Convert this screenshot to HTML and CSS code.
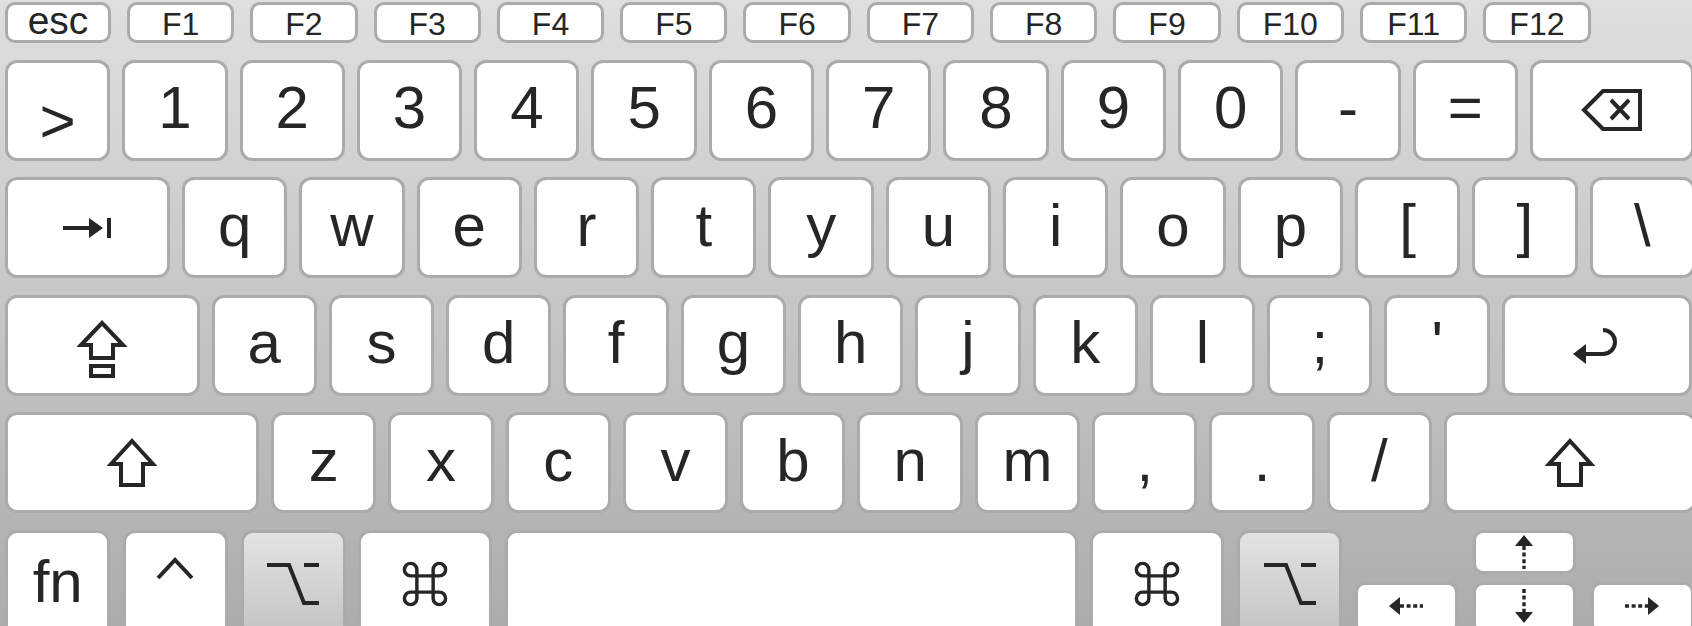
FILE: index.html
```html
<!DOCTYPE html>
<html lang="en">
<head>
  <meta charset="UTF-8">
  <title>Keyboard</title>
  <link rel="stylesheet" href="styles.css">
</head>
<body>
  <div class="keyboard">
    <!-- Function row -->
    <div class="row row-fn">
      <div class="key fkey esc">esc</div>
      <div class="key fkey">F1</div>
      <div class="key fkey">F2</div>
      <div class="key fkey">F3</div>
      <div class="key fkey">F4</div>
      <div class="key fkey">F5</div>
      <div class="key fkey">F6</div>
      <div class="key fkey">F7</div>
      <div class="key fkey">F8</div>
      <div class="key fkey">F9</div>
      <div class="key fkey">F10</div>
      <div class="key fkey">F11</div>
      <div class="key fkey">F12</div>
    </div>

    <!-- Number row -->
    <div class="row">
      <div class="key gt">&gt;</div>
      <div class="key">1</div>
      <div class="key">2</div>
      <div class="key">3</div>
      <div class="key">4</div>
      <div class="key">5</div>
      <div class="key">6</div>
      <div class="key">7</div>
      <div class="key">8</div>
      <div class="key">9</div>
      <div class="key">0</div>
      <div class="key">-</div>
      <div class="key">=</div>
      <div class="key w-back icon-key">
        <svg class="ico" width="62" height="44" viewBox="0 0 62 44">
          <path d="M3 22L22 3H59V41H22Z"/>
          <path d="M30 12L48 31M48 12L30 31"/>
        </svg>
      </div>
    </div>

    <!-- Top letter row -->
    <div class="row">
      <div class="key w-tab icon-key">
        <svg class="ico" width="50" height="24" viewBox="0 0 50 24">
          <path d="M0 12H30"/>
          <path class="fill" d="M26 2L40 12L26 22Z"/>
          <rect class="fill" x="44" y="2" width="4" height="20"/>
        </svg>
      </div>
      <div class="key">q</div>
      <div class="key">w</div>
      <div class="key">e</div>
      <div class="key">r</div>
      <div class="key">t</div>
      <div class="key">y</div>
      <div class="key">u</div>
      <div class="key">i</div>
      <div class="key">o</div>
      <div class="key">p</div>
      <div class="key">[</div>
      <div class="key">]</div>
      <div class="key">\</div>
    </div>

    <!-- Home row -->
    <div class="row">
      <div class="key w-caps icon-key caps">
        <svg class="ico" width="50" height="58" viewBox="0 0 50 58">
          <path d="M25 3L46 25H36V38H14V25H4Z"/>
          <rect x="14" y="46" width="22" height="10"/>
        </svg>
      </div>
      <div class="key">a</div>
      <div class="key">s</div>
      <div class="key">d</div>
      <div class="key">f</div>
      <div class="key">g</div>
      <div class="key">h</div>
      <div class="key">j</div>
      <div class="key">k</div>
      <div class="key">l</div>
      <div class="key">;</div>
      <div class="key">'</div>
      <div class="key w-return icon-key">
        <svg class="ico" width="48" height="38" viewBox="0 0 48 38">
          <path d="M30 4A12 12 0 0 1 30 28H11"/>
          <path class="fill" d="M0 28L13 18V38Z"/>
        </svg>
      </div>
    </div>

    <!-- Bottom letter row -->
    <div class="row">
      <div class="key w-lshift icon-key">
        <svg class="ico" width="50" height="50" viewBox="0 0 50 50">
          <path d="M25 3L46 26H36V47H14V26H4Z"/>
        </svg>
      </div>
      <div class="key">z</div>
      <div class="key">x</div>
      <div class="key">c</div>
      <div class="key">v</div>
      <div class="key">b</div>
      <div class="key">n</div>
      <div class="key">m</div>
      <div class="key">,</div>
      <div class="key">.</div>
      <div class="key">/</div>
      <div class="key w-rshift icon-key">
        <svg class="ico" width="50" height="50" viewBox="0 0 50 50">
          <path d="M25 3L46 26H36V47H14V26H4Z"/>
        </svg>
      </div>
    </div>

    <!-- Modifier row -->
    <div class="row row-bottom">
      <div class="key">fn</div>
      <div class="key icon-key ctrl">
        <svg class="ico" width="40" height="24" viewBox="0 0 40 24">
          <path d="M3 22L20 4L37 22"/>
        </svg>
      </div>
      <div class="key mod icon-key">
        <svg class="ico" width="52" height="44" viewBox="0 0 52 44">
          <path d="M0 3H22L37 41H52M37 3H52"/>
        </svg>
      </div>
      <div class="key w-cmd icon-key">
        <svg class="ico cmd" width="46" height="46" viewBox="0 0 48 48">
          <path d="M15.5 15.5H32.5V32.5H15.5Z"/>
          <path d="M15.5 15.5V9A6.5 6.5 0 1 0 9 15.5H15.5"/>
          <path d="M32.5 15.5V9A6.5 6.5 0 1 1 39 15.5H32.5"/>
          <path d="M15.5 32.5V39A6.5 6.5 0 1 1 9 32.5H15.5"/>
          <path d="M32.5 32.5V39A6.5 6.5 0 1 0 39 32.5H32.5"/>
        </svg>
      </div>
      <div class="key w-space"></div>
      <div class="key w-cmd icon-key">
        <svg class="ico cmd" width="46" height="46" viewBox="0 0 48 48">
          <path d="M15.5 15.5H32.5V32.5H15.5Z"/>
          <path d="M15.5 15.5V9A6.5 6.5 0 1 0 9 15.5H15.5"/>
          <path d="M32.5 15.5V9A6.5 6.5 0 1 1 39 15.5H32.5"/>
          <path d="M15.5 32.5V39A6.5 6.5 0 1 1 9 32.5H15.5"/>
          <path d="M32.5 32.5V39A6.5 6.5 0 1 0 39 32.5H32.5"/>
        </svg>
      </div>
      <div class="key mod icon-key">
        <svg class="ico" width="52" height="44" viewBox="0 0 52 44">
          <path d="M0 3H22L37 41H52M37 3H52"/>
        </svg>
      </div>

      <!-- Arrow cluster -->
      <div class="key arrow-key arrow-low icon-key">
        <svg class="ico arrow" width="34" height="18" viewBox="0 0 34 18">
          <path class="fill" d="M0 9L11 0V18Z"/>
          <path class="dash" d="M11 9H34"/>
        </svg>
      </div>
      <div class="arrows-v">
        <div class="key arrow-key icon-key">
          <svg class="ico arrow" width="18" height="34" viewBox="0 0 18 34">
            <path class="fill" d="M9 0L18 11H0Z"/>
            <path class="dash" d="M9 11V34"/>
          </svg>
        </div>
        <div class="key arrow-key arrow-down icon-key">
          <svg class="ico arrow" width="18" height="34" viewBox="0 0 18 34">
            <path class="dash" d="M9 0V23"/>
            <path class="fill" d="M9 34L18 23H0Z"/>
          </svg>
        </div>
      </div>
      <div class="key arrow-key arrow-low icon-key">
        <svg class="ico arrow" width="34" height="18" viewBox="0 0 34 18">
          <path class="dash" d="M0 9H23"/>
          <path class="fill" d="M34 9L23 0V18Z"/>
        </svg>
      </div>
    </div>
  </div>
</body>
</html>
```

FILE: styles.css
```css
* {
  box-sizing: border-box;
}

body {
  margin: 0;
  height: 100vh;
  overflow: hidden;
  background: linear-gradient(#dfdfdf, #acacac);
  font-family: "Liberation Sans", Arial, sans-serif;
  color: #262626;
}

.keyboard {
  display: flex;
  flex-direction: column;
  gap: 16.5px;
  padding: 2px 0 0 5px;
}

.row {
  display: flex;
  gap: 12px;
  height: 101px;
}

.key {
  flex: none;
  width: 105.3px;
  height: 100%;
  display: flex;
  align-items: center;
  justify-content: center;
  padding-bottom: 4px;
  background: #fff;
  border: 3px solid #ababab;
  border-radius: 12px;
  font-size: 60px;
  line-height: 60px;
}

/* === Function row === */
.row-fn {
  height: 41px;
  gap: 16px;
}

.fkey {
  width: 107.3px;
  padding: 2px 0 0;
  border-radius: 10px;
  font-size: 32px;
  line-height: 32px;
}

.fkey.esc {
  width: 106px;
  padding: 0 0 4px;
  font-size: 39px;
  line-height: 40px;
}

.gt {
  padding: 22px 0 0;
  font-size: 62px;
}

/* wide keys */
.w-back { width: 164px; }
.w-tab { width: 165px; }
.w-caps { width: 194.5px; }
.w-return { width: 190px; }
.w-lshift { width: 254px; }
.w-rshift { width: 252px; }
.w-cmd { width: 134px; }
.w-space { width: 573px; }

.icon-key {
  padding: 0;
}

.caps {
  padding-top: 8px;
}

/* === Icons === */
.ico {
  fill: none;
  stroke: #262626;
  stroke-width: 4;
}

.ico .fill {
  fill: #262626;
  stroke: none;
}

.ico.cmd {
  stroke-width: 3.6;
}

.ico.arrow .dash {
  stroke-width: 3.4;
  stroke-dasharray: 4 2.6;
}

/* === Modifier row === */
.row-bottom {
  height: 109px;
  gap: 12.5px;
}

.row-bottom .ctrl {
  padding-bottom: 32px;
}

.mod {
  background: linear-gradient(#e3e3e3, #c3c3c3);
}

.row-bottom .arrow-key {
  width: 103px;
  height: 44px;
  padding: 0;
  border-radius: 10px;
}

.row-bottom .arrow-low {
  height: 52px;
  margin-top: 52px;
  padding-bottom: 3px;
}

.arrows-v {
  display: flex;
  flex-direction: column;
  gap: 8px;
  margin: 0 2.5px;
}

.row-bottom .arrow-down {
  height: 52px;
  padding-bottom: 3px;
}
```
